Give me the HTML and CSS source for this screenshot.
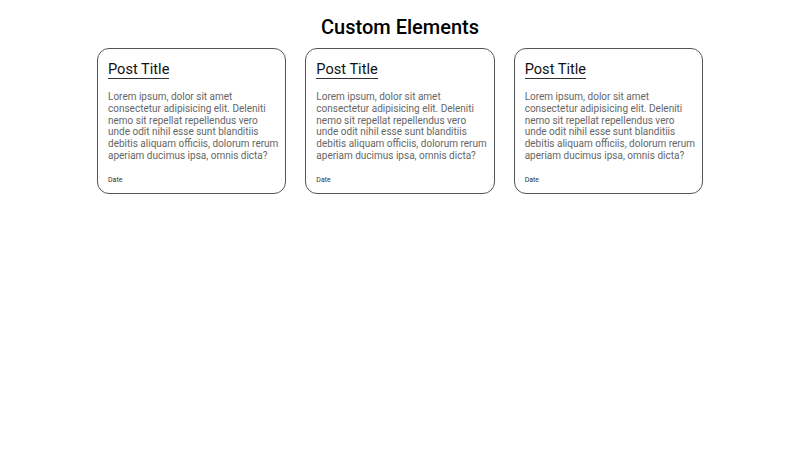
FILE: index.html
```html
<!DOCTYPE html>
<html>
<head>
<meta charset="utf-8">
<link rel="stylesheet" href="styles.css">
</head>
<body>
<h1 class="page-title">Custom Elements</h1>
<div class="cards">
  <div class="card">
    <h2 class="card-title">Post Title</h2>
    <p class="card-text">Lorem ipsum, dolor sit amet consectetur adipisicing elit. Deleniti nemo sit repellat repellendus vero unde odit nihil esse sunt blanditiis debitis aliquam officiis, dolorum rerum aperiam ducimus ipsa, omnis dicta?</p>
    <div class="card-date">Date</div>
  </div>
  <div class="card">
    <h2 class="card-title">Post Title</h2>
    <p class="card-text">Lorem ipsum, dolor sit amet consectetur adipisicing elit. Deleniti nemo sit repellat repellendus vero unde odit nihil esse sunt blanditiis debitis aliquam officiis, dolorum rerum aperiam ducimus ipsa, omnis dicta?</p>
    <div class="card-date">Date</div>
  </div>
  <div class="card">
    <h2 class="card-title">Post Title</h2>
    <p class="card-text">Lorem ipsum, dolor sit amet consectetur adipisicing elit. Deleniti nemo sit repellat repellendus vero unde odit nihil esse sunt blanditiis debitis aliquam officiis, dolorum rerum aperiam ducimus ipsa, omnis dicta?</p>
    <div class="card-date">Date</div>
  </div>
</div>
</body>
</html>
```
FILE: styles.css
```css
* { box-sizing: border-box; }
body {
  margin: 0;
  background: #fff;
  font-family: Roboto, "Liberation Sans", sans-serif;
  color: #111;
}
.page-title {
  margin: 14px 0 0;
  text-align: center;
  font-size: 20px;
  font-weight: 500;
  line-height: 26px;
  color: #000;
}
.cards {
  width: 606px;
  margin: 8px auto 0;
  display: grid;
  grid-template-columns: repeat(3, 1fr);
  gap: 19px;
}
.card {
  border: 1px solid #555;
  border-radius: 12px;
  padding: 10px 5px 10px 10px;
  height: 146px;
}
.card-title {
  display: inline-block;
  margin: 0;
  font-size: 14.6px;
  font-weight: 400;
  line-height: 18px;
  color: #111;
  border-bottom: 1.5px solid #333;
}
.card-text {
  margin: 12px 0 0;
  font-size: 10px;
  line-height: 11.8px;
  color: #666;
}
.card-date {
  margin-top: 14px;
  font-size: 7px;
  color: #333;
}
```
